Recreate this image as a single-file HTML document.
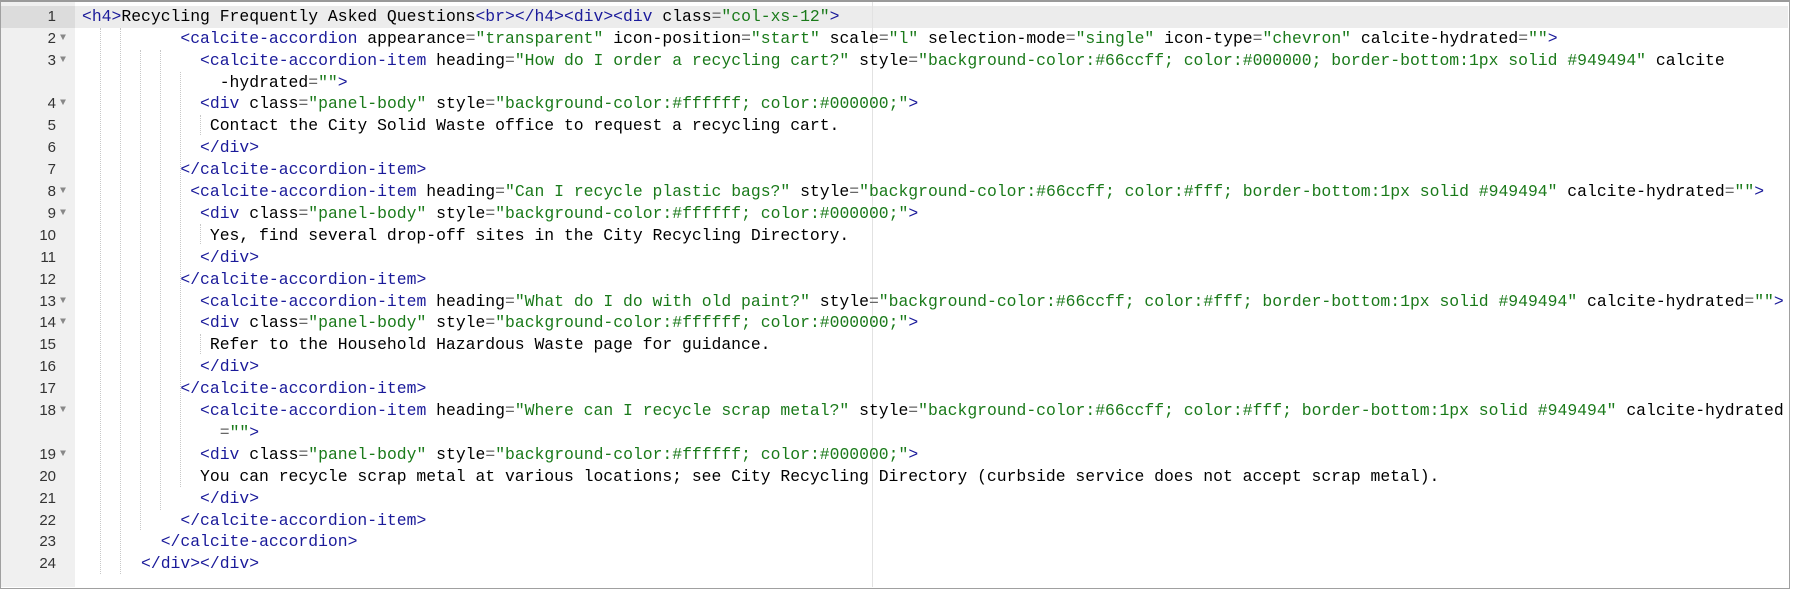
<!DOCTYPE html>
<html><head><meta charset="utf-8"><style>
html,body{margin:0;padding:0;background:#fff}
#w{position:relative;width:1793px;height:589px;overflow:hidden;background:#fff;font-family:"Liberation Mono",monospace;font-size:16.4px}
#border{position:absolute;left:0;top:0;width:1788px;height:586px;border:1px solid #a0a0a0;border-top:2px solid #9a9a9a;box-sizing:content-box}
#gut{position:absolute;left:1px;top:2px;width:74px;height:585px;background:#f0f0f0}
.r{position:absolute;left:0;height:22px;line-height:22px;white-space:pre}
.n{position:absolute;left:1px;width:55px;text-align:right;height:22px;line-height:22px;color:#333;font-family:"Liberation Sans",sans-serif;font-size:15px}
.f{position:absolute;left:60px;height:22px;line-height:22px;color:#888;font-size:10px}
.c{left:82px;color:#000}
.t{color:#1a1a9a}.v{color:#1a7a1a}.e{color:#666}
.g{position:absolute;width:0;border-left:1px dotted #c8c8c8}
#pm{position:absolute;left:872px;top:2px;width:1px;height:585px;background:#e2e2e2}
</style></head><body><div id="w">
<div id="gut"></div>
<div style="position:absolute;left:1px;top:6px;width:74px;height:22px;background:#dcdcdc"></div>
<div style="position:absolute;left:75px;top:6px;width:1713px;height:22px;background:#ececec"></div>
<div id="pm"></div>
<div class="g" style="left:100px;top:28px;height:546px"></div>
<div class="g" style="left:120px;top:28px;height:546px"></div>
<div class="g" style="left:140px;top:50px;height:480px"></div>
<div class="g" style="left:160px;top:50px;height:460px"></div>
<div class="g" style="left:180px;top:72px;height:415px"></div>
<div class="g" style="left:200px;top:115px;height:20px"></div>
<div class="g" style="left:200px;top:224px;height:20px"></div>
<div class="g" style="left:200px;top:334px;height:20px"></div>

<div class="n" style="top:6px">1</div>
<div class="n" style="top:28px">2</div><div class="f" style="top:28px">▼</div>
<div class="n" style="top:50px">3</div><div class="f" style="top:50px">▼</div>
<div class="n" style="top:93px">4</div><div class="f" style="top:93px">▼</div>
<div class="n" style="top:115px">5</div>
<div class="n" style="top:137px">6</div>
<div class="n" style="top:159px">7</div>
<div class="n" style="top:181px">8</div><div class="f" style="top:181px">▼</div>
<div class="n" style="top:203px">9</div><div class="f" style="top:203px">▼</div>
<div class="n" style="top:225px">10</div>
<div class="n" style="top:247px">11</div>
<div class="n" style="top:269px">12</div>
<div class="n" style="top:291px">13</div><div class="f" style="top:291px">▼</div>
<div class="n" style="top:312px">14</div><div class="f" style="top:312px">▼</div>
<div class="n" style="top:334px">15</div>
<div class="n" style="top:356px">16</div>
<div class="n" style="top:378px">17</div>
<div class="n" style="top:400px">18</div><div class="f" style="top:400px">▼</div>
<div class="n" style="top:444px">19</div><div class="f" style="top:444px">▼</div>
<div class="n" style="top:466px">20</div>
<div class="n" style="top:488px">21</div>
<div class="n" style="top:510px">22</div>
<div class="n" style="top:531px">23</div>
<div class="n" style="top:553px">24</div>

<div class="r c" style="top:6px"><span class="t">&lt;h4&gt;</span>Recycling Frequently Asked Questions<span class="t">&lt;br&gt;&lt;/h4&gt;&lt;div&gt;&lt;div</span> class<span class="e">=</span><span class="v">"col-xs-12"</span><span class="t">&gt;</span></div>
<div class="r c" style="top:28px">          <span class="t">&lt;calcite-accordion</span> appearance<span class="e">=</span><span class="v">"transparent"</span> icon-position<span class="e">=</span><span class="v">"start"</span> scale<span class="e">=</span><span class="v">"l"</span> selection-mode<span class="e">=</span><span class="v">"single"</span> icon-type<span class="e">=</span><span class="v">"chevron"</span> calcite-hydrated<span class="e">=</span><span class="v">""</span><span class="t">&gt;</span></div>
<div class="r c" style="top:50px">            <span class="t">&lt;calcite-accordion-item</span> heading<span class="e">=</span><span class="v">"How do I order a recycling cart?"</span> style<span class="e">=</span><span class="v">"background-color:#66ccff; color:#000000; border-bottom:1px solid #949494"</span> calcite</div>
<div class="r c" style="top:72px">              -hydrated<span class="e">=</span><span class="v">""</span><span class="t">&gt;</span></div>
<div class="r c" style="top:93px">            <span class="t">&lt;div</span> class<span class="e">=</span><span class="v">"panel-body"</span> style<span class="e">=</span><span class="v">"background-color:#ffffff; color:#000000;"</span><span class="t">&gt;</span></div>
<div class="r c" style="top:115px">             Contact the City Solid Waste office to request a recycling cart.</div>
<div class="r c" style="top:137px">            <span class="t">&lt;/div&gt;</span></div>
<div class="r c" style="top:159px">          <span class="t">&lt;/calcite-accordion-item&gt;</span></div>
<div class="r c" style="top:181px">           <span class="t">&lt;calcite-accordion-item</span> heading<span class="e">=</span><span class="v">"Can I recycle plastic bags?"</span> style<span class="e">=</span><span class="v">"background-color:#66ccff; color:#fff; border-bottom:1px solid #949494"</span> calcite-hydrated<span class="e">=</span><span class="v">""</span><span class="t">&gt;</span></div>
<div class="r c" style="top:203px">            <span class="t">&lt;div</span> class<span class="e">=</span><span class="v">"panel-body"</span> style<span class="e">=</span><span class="v">"background-color:#ffffff; color:#000000;"</span><span class="t">&gt;</span></div>
<div class="r c" style="top:225px">             Yes, find several drop-off sites in the City Recycling Directory.</div>
<div class="r c" style="top:247px">            <span class="t">&lt;/div&gt;</span></div>
<div class="r c" style="top:269px">          <span class="t">&lt;/calcite-accordion-item&gt;</span></div>
<div class="r c" style="top:291px">            <span class="t">&lt;calcite-accordion-item</span> heading<span class="e">=</span><span class="v">"What do I do with old paint?"</span> style<span class="e">=</span><span class="v">"background-color:#66ccff; color:#fff; border-bottom:1px solid #949494"</span> calcite-hydrated<span class="e">=</span><span class="v">""</span><span class="t">&gt;</span></div>
<div class="r c" style="top:312px">            <span class="t">&lt;div</span> class<span class="e">=</span><span class="v">"panel-body"</span> style<span class="e">=</span><span class="v">"background-color:#ffffff; color:#000000;"</span><span class="t">&gt;</span></div>
<div class="r c" style="top:334px">             Refer to the Household Hazardous Waste page for guidance.</div>
<div class="r c" style="top:356px">            <span class="t">&lt;/div&gt;</span></div>
<div class="r c" style="top:378px">          <span class="t">&lt;/calcite-accordion-item&gt;</span></div>
<div class="r c" style="top:400px">            <span class="t">&lt;calcite-accordion-item</span> heading<span class="e">=</span><span class="v">"Where can I recycle scrap metal?"</span> style<span class="e">=</span><span class="v">"background-color:#66ccff; color:#fff; border-bottom:1px solid #949494"</span> calcite-hydrated</div>
<div class="r c" style="top:422px">              <span class="e">=</span><span class="v">""</span><span class="t">&gt;</span></div>
<div class="r c" style="top:444px">            <span class="t">&lt;div</span> class<span class="e">=</span><span class="v">"panel-body"</span> style<span class="e">=</span><span class="v">"background-color:#ffffff; color:#000000;"</span><span class="t">&gt;</span></div>
<div class="r c" style="top:466px">            You can recycle scrap metal at various locations; see City Recycling Directory (curbside service does not accept scrap metal).</div>
<div class="r c" style="top:488px">            <span class="t">&lt;/div&gt;</span></div>
<div class="r c" style="top:510px">          <span class="t">&lt;/calcite-accordion-item&gt;</span></div>
<div class="r c" style="top:531px">        <span class="t">&lt;/calcite-accordion&gt;</span></div>
<div class="r c" style="top:553px">      <span class="t">&lt;/div&gt;&lt;/div&gt;</span></div>
<div id="border"></div>
</div></body></html>
